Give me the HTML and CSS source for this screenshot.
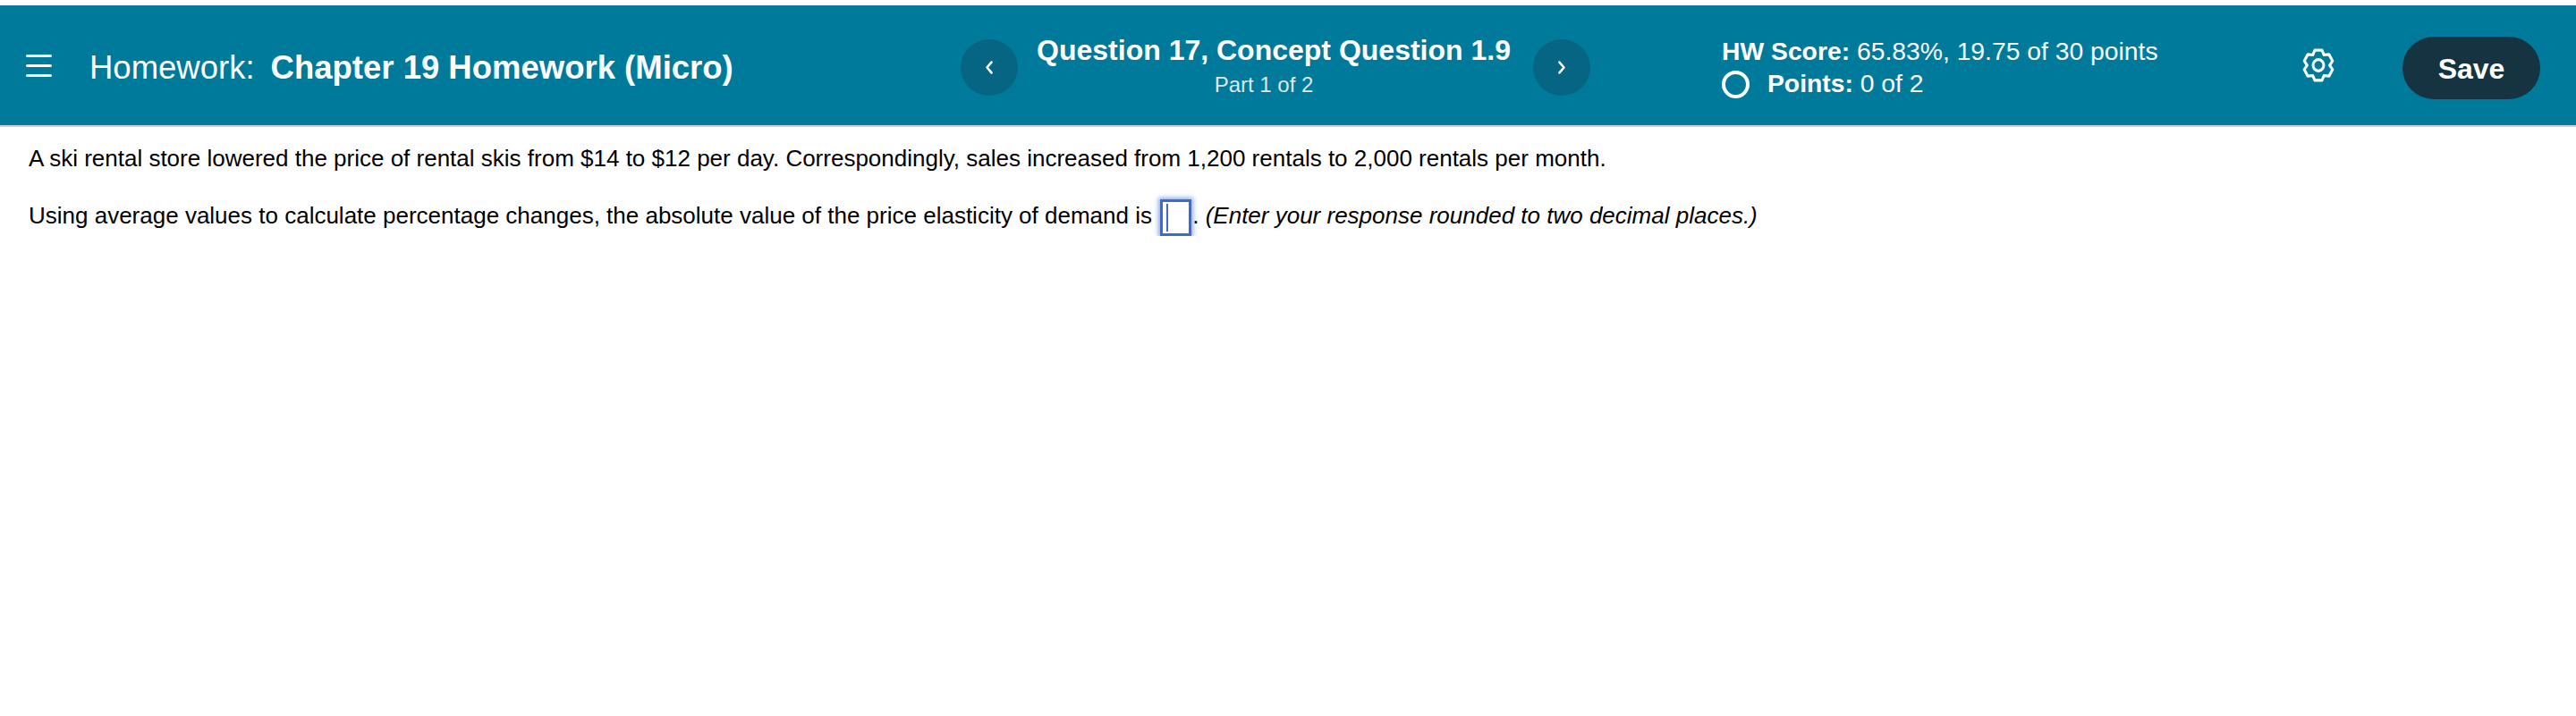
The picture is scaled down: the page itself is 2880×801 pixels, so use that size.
FILE: index.html
```html
<!DOCTYPE html>
<html lang="en">
<head>
    <meta charset="UTF-8">
    <meta name="viewport" content="width=device-width, initial-scale=1.0">
    <title>Homework: Chapter 19 Homework (Micro)</title>
    <link rel="stylesheet" href="styles.css">
</head>
<body>
    <header class="barra">
        <div class="titulo">
            <div class="hamburguesa"><span></span><span></span><span></span></div>
            <span class="tarea">Homework:</span>
            <strong class="capitulo">Chapter 19 Homework (Micro)</strong>
        </div>
        <div class="pregunta">
            <button class="flecha">
                <svg width="14" height="20" viewBox="0 0 14 20"><path d="M10 3 L4 10 L10 17"/></svg>
            </button>
            <div class="pregunta-texto">
                <div class="pregunta-nombre">Question 17, Concept Question 1.9</div>
                <div class="pregunta-parte">Part 1 of 2</div>
            </div>
            <button class="flecha">
                <svg width="14" height="20" viewBox="0 0 14 20"><path d="M4 3 L10 10 L4 17"/></svg>
            </button>
        </div>
        <div class="puntaje">
            <div><strong>HW Score:</strong> 65.83%, 19.75 of 30 points</div>
            <div class="puntos"><span class="circulo"></span><span><strong>Points:</strong> 0 of 2</span></div>
        </div>
        <svg class="engrane" width="36" height="38" viewBox="0 0 24 24" preserveAspectRatio="none">
            <polygon points="9.34,1.33 14.66,1.33 16.2,4.73 19.91,4.36 22.57,8.97 20.4,12 22.57,15.03 19.91,19.64 16.2,19.27 14.66,22.67 9.34,22.67 7.8,19.27 4.09,19.64 1.43,15.03 3.6,12 1.43,8.97 4.09,4.36 7.8,4.73"/>
            <circle cx="12" cy="12" r="4"/>
        </svg>
        <button class="guardar">Save</button>
    </header>

    <main class="contenido">
        <p>A ski rental store lowered the price of rental skis from $14 to $12 per day. Correspondingly, sales increased from 1,200 rentals to 2,000 rentals per month.</p>
        <p>Using average values to calculate percentage changes, the absolute value of the price elasticity of demand is <span class="respuesta"><span class="cursor"></span></span>. <em>(Enter your response rounded to two decimal places.)</em></p>
    </main>
</body>
</html>
```

FILE: styles.css
```css
* {
    box-sizing: border-box;
}

body {
    margin: 0;
    padding-top: 6px;
    background: #fff;
    color: #000;
    font-family: "Liberation Sans", Arial, sans-serif;
}

.barra {
    display: flex;
    align-items: center;
    height: 136px;
    background: #007a9b;
    border-bottom: 2px solid #c9ced8;
    color: #fff;
}

.titulo {
    display: flex;
    align-items: center;
    width: 1074px;
    padding-left: 29px;
    font-size: 36.5px;
}

.tarea,
.capitulo {
    margin-top: 6px;
}

.hamburguesa {
    display: flex;
    flex-direction: column;
    gap: 8px;
    width: 29px;
    margin-right: 42px;
}

.hamburguesa span {
    height: 3px;
    border-radius: 2px;
    background: #fff;
}

.capitulo {
    margin-left: 18px;
}

.pregunta {
    display: flex;
    align-items: center;
    justify-content: space-between;
    width: 704px;
}

.flecha {
    display: flex;
    align-items: center;
    justify-content: center;
    width: 64px;
    height: 63px;
    margin-top: 5px;
    padding: 0;
    border: 0;
    border-radius: 50%;
    background: #056582;
}

.flecha svg {
    height: 17px;
}

.flecha path {
    fill: none;
    stroke: #fff;
    stroke-width: 3;
    stroke-linecap: round;
    stroke-linejoin: round;
}

.pregunta-texto {
    padding-right: 4px;
    text-align: center;
}

.pregunta-nombre {
    font-size: 32px;
    font-weight: bold;
    line-height: 40px;
}

.pregunta-parte {
    margin-top: 4px;
    padding-right: 22px;
    font-size: 24px;
    line-height: 30px;
    color: #dfe8ee;
}

.puntaje {
    width: 649px;
    margin-top: 3px;
    margin-left: 147px;
    font-size: 28.3px;
    line-height: 36px;
}

.puntos {
    display: flex;
    align-items: center;
    gap: 20px;
}

.circulo {
    width: 31px;
    height: 31px;
    margin-top: 4px;
    border: 4px solid #fff;
    border-radius: 50%;
}

.engrane {
    flex: none;
    margin-right: 76px;
}

.engrane polygon,
.engrane circle {
    fill: none;
    stroke: #fff;
    stroke-width: 2;
    stroke-linejoin: round;
}

.guardar {
    width: 154px;
    height: 70px;
    margin-top: 6px;
    padding: 2px 0 0;
    border: 0;
    border-radius: 35px;
    background: #163342;
    color: #fff;
    font-family: inherit;
    font-size: 32px;
    font-weight: bold;
}

.contenido {
    padding: 0 32px;
    font-size: 26px;
}

.contenido p {
    margin: 0;
    line-height: 40px;
}

.contenido p:first-child {
    margin-top: 15px;
}

.contenido p + p {
    margin-top: 24px;
}

.respuesta {
    display: inline-flex;
    align-items: center;
    width: 35px;
    height: 41px;
    margin: 0 1px 0 2px;
    padding-left: 4px;
    vertical-align: -9px;
    border: 3px solid #3a6bd2;
    box-shadow: 0 0 5px 2px #8fade8;
}

.cursor {
    width: 2px;
    height: 31px;
    background: #3a6bd2;
}
```
